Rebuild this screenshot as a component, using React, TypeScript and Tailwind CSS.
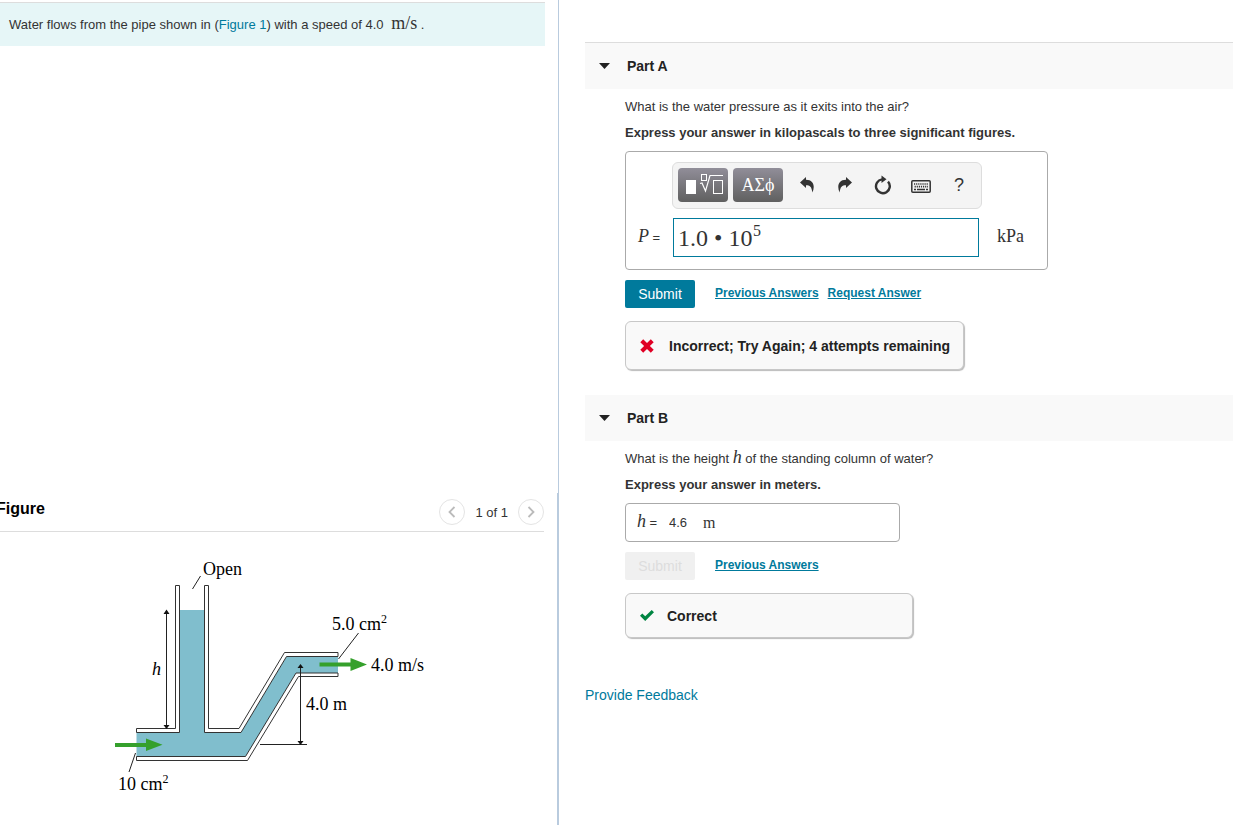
import React from "react";

const serif = "font-['Liberation_Serif',serif]";

function PartHeader({ title, className = "" }: { title: string; className?: string }) {
  return (
    <h2 className={"bg-[#f9f9f9] text-sm font-bold text-[#222] " + className}>
      <button type="button" className="flex h-[46px] w-full items-center pl-[14px] text-left">
        <svg className="mr-[17px]" width="11" height="6" viewBox="0 0 11 6">
          <path d="M0 0H11L5.5 6Z" fill="#222" />
        </svg>
        {title}
      </button>
    </h2>
  );
}

function TextLink({ children }: { children: React.ReactNode }) {
  return (
    <a href="#" className="text-xs font-bold text-[#007a9c] underline">
      {children}
    </a>
  );
}

function TemplateIcon() {
  return (
    <svg width="50" height="34" viewBox="0 0 50 34" fill="none" stroke="#fff">
      <rect x="8" y="12" width="10" height="14" fill="#fff" stroke="none" />
      <rect x="23.5" y="6.5" width="5" height="6" />
      <path d="M22 15.500L24 15L27.500 23L32 7.500H45" strokeWidth="1.2" />
      <rect x="35.5" y="12.5" width="9" height="13" />
    </svg>
  );
}

function UndoIcon({ flip = false }: { flip?: boolean }) {
  return (
    <svg className={flip ? "-scale-x-100" : ""} width="14" height="16" viewBox="0 0 14 16" fill="#333">
      <path d="M6 0L0 5.500L6 11V8.200C10 8.200 11.600 9.500 12.400 15.500C15 10 14.200 2.800 6 2.800Z" />
    </svg>
  );
}

function ResetIcon() {
  return (
    <svg width="18" height="20" viewBox="0 0 18 20" fill="none">
      <path d="M14 6.600A6.900 6.900 0 1 1 8 4.400" stroke="#333" strokeWidth="2.4" />
      <path d="M7.500 0.500L12.500 4.300L7.500 8.100Z" fill="#333" />
    </svg>
  );
}

function KeyboardIcon() {
  return (
    <svg width="20" height="13" viewBox="0 0 20 13" fill="none" stroke="#333">
      <rect x="0.8" y="0.8" width="18.4" height="11.4" rx="1" strokeWidth="1.5" />
      <path d="M3 4H17" strokeWidth="1.6" strokeDasharray="1.2 0.9" />
      <path d="M3.600 6.600H17" strokeWidth="1.6" strokeDasharray="1.2 0.9" />
      <path d="M3 9.400H5M6 9.400H14M15 9.400H17" strokeWidth="1.5" />
    </svg>
  );
}

function CrossIcon() {
  return (
    <svg className="mr-[15px]" width="14" height="14" viewBox="0 0 14 14" fill="#e00025">
      <path d="M3.200 0.300L7 4.100L10.800 0.300L13.700 3.200L9.900 7L13.700 10.800L10.800 13.700L7 9.900L3.200 13.700L0.300 10.800L4.100 7L0.300 3.200Z" />
    </svg>
  );
}

function CheckIcon() {
  return (
    <svg className="mr-[13px]" width="14" height="11" viewBox="0 0 14 11" fill="#008542">
      <path d="M2.300 3.500L5.200 6.300L11.700 0L14 2.300L5.200 11L0 5.800Z" />
    </svg>
  );
}

function PipeFigure() {
  return (
    <svg
      className={serif}
      width="340"
      height="250"
      viewBox="100 550 340 250"
      fontSize="18"
      role="img"
      aria-label="Pipe with an open standing column"
    >
      {/* water */}
      <path
        d="M179 610H204.500V732.500H240.500L286.500 656.500H338V673H296L246 756.500H136.500V732.500H179Z"
        fill="#80becd"
      />
      {/* pipe walls */}
      <g fill="#fff" stroke="#333" strokeWidth="1">
        <path d="M175.500 585.500H179.500V732.500H136.500V728.500H175.500Z" />
        <path d="M204.500 585.500H208.500V728.500H239L284.500 652.500H338V656.500H286.500L241 732.500H204.500Z" />
        <path d="M136.500 756.500H245.500L296 673H338V676.500H298.500L247.500 760.500H136.500Z" />
      </g>
      <g fill="none" stroke="#222" strokeWidth="1">
        <path d="M166.500 611V727M300.500 665V743M260 744.500H307" />
        <path d="M200.500 576L192.500 589M358.500 633L338.500 659M135.500 753L129 772" />
      </g>
      <g fill="#111">
        <path d="M163.500 614L166.500 609.500L169.500 614ZM163.500 725L166.500 729L169.500 725Z" />
        <path d="M297.500 668L300.500 664L303.500 668ZM297.500 741L300.500 745L303.500 741Z" />
      </g>
      <g fill="#35a02c">
        <path d="M115 743H146V738.500L162.500 744.800L146 751V747H115Z" />
        <path d="M319.500 662.500H350.500V658L367 664.500L350.500 671V666.500H319.500Z" />
      </g>
      <g fill="#000">
        <text x="203" y="575">Open</text>
        <text x="332" y="630">5.0 cm<tspan dy="-7" fontSize="12">2</tspan></text>
        <text x="371" y="671">4.0 m/s</text>
        <text x="306" y="710">4.0 m</text>
        <text x="152" y="675" fontStyle="italic">h</text>
        <text x="118" y="790">10 cm<tspan dy="-7" fontSize="12">2</tspan></text>
      </g>
    </svg>
  );
}

export default function App() {
  return (
    <div className="grid min-h-screen grid-cols-[559fr_674fr] bg-white font-['Liberation_Sans',Arial,sans-serif] text-[13px] text-[#333]">
      <div className="flex min-w-0 flex-col justify-between">
        <div className="grow border-r border-[#b9cbde] pt-0.5 pr-[13px]">
          <p className="h-11 border-t border-[#ddd] bg-[#e6f6f7] pl-[9px] leading-[44px]">
            Water flows from the pipe shown in (
            <a href="#figure" className="text-[#007a9c]">Figure 1</a>) with a speed of 4.0{" "}
            <span className={serif + " ml-1 text-lg leading-none"}>m/s</span> .
          </p>
        </div>

        <section id="figure" className="overflow-hidden border-r-2 border-[#b9cbde] pr-[13px]">
          <div className="flex h-[39px] items-center justify-between border-b border-[#ddd]">
            <h2 className="-ml-1 pb-1.5 text-base font-bold text-black">Figure</h2>
            <div className="flex items-center gap-[10px]">
              <button type="button" aria-label="Previous figure" className="flex size-[26px] items-center justify-center rounded-full border border-[#e4e4e4] text-[#bbb]">
                <svg width="8" height="12" viewBox="0 0 8 12" fill="none" stroke="currentColor" strokeWidth="1.8"><path d="M6.500 1L1.500 6L6.500 11" /></svg>
              </button>
              <span className="pt-0.5">1 of 1</span>
              <button type="button" aria-label="Next figure" className="flex size-[26px] items-center justify-center rounded-full border border-[#e4e4e4] text-[#bbb]">
                <svg width="8" height="12" viewBox="0 0 8 12" fill="none" stroke="currentColor" strokeWidth="1.8"><path d="M1.500 1L6.500 6L1.500 11" /></svg>
              </button>
            </div>
          </div>
          <div className="pt-[18px] pb-[25px] pl-[100px]">
            <PipeFigure />
          </div>
        </section>
      </div>

      <main className="min-w-0 pt-[42px] pl-[26px]">
        <PartHeader title="Part A" className="border-t border-[#ddd]" />
        <div className="pt-[5px] pl-10">
          <p className="leading-[26px]">What is the water pressure as it exits into the air?</p>
          <p className="leading-[26px] font-bold">Express your answer in kilopascals to three significant figures.</p>

          <div className="mt-[5px] h-[119px] max-w-[423px] rounded border border-[#aaa] pt-[10px] pl-3">
            <div className="ml-[34px] flex h-[47px] w-[310px] items-center rounded-md border border-[#ddd] bg-[#f4f4f4] pb-0.5 pl-[5px]">
              <button type="button" aria-label="Templates" className="mr-[5px] h-[34px] w-[50px] rounded bg-linear-to-b from-[#918e99] to-[#606060]">
                <TemplateIcon />
              </button>
              <button type="button" className={serif + " mr-[5px] h-[34px] w-[50px] rounded bg-linear-to-b from-[#918e99] to-[#606060] text-lg text-white"}>
                ΑΣϕ
              </button>
              <button type="button" aria-label="Undo" className="flex w-[38px] justify-center"><UndoIcon /></button>
              <button type="button" aria-label="Redo" className="flex w-[38px] justify-center"><UndoIcon flip /></button>
              <button type="button" aria-label="Reset" className="flex w-[38px] justify-center"><ResetIcon /></button>
              <button type="button" aria-label="Keyboard" className="flex w-[38px] justify-center pt-1"><KeyboardIcon /></button>
              <button type="button" aria-label="Help" className="w-[38px] text-lg">?</button>
            </div>
            <div className="mt-[9px] flex items-center">
              <label htmlFor="pressure" className="w-[35px]">
                <i className={serif + " text-lg leading-none"}>P</i> =
              </label>
              <div className={serif + " flex h-[39px] w-[306px] border border-[#007a9c] pl-1"}>
                <input id="pressure" defaultValue="1.0 • 10" className="w-[75px] text-2xl outline-none" />
                <input aria-label="Exponent" defaultValue="5" className="h-6 min-w-0 grow text-base outline-none" />
              </div>
              <span className={serif + " ml-[18px] pb-1 text-lg leading-none"}>kPa</span>
            </div>
          </div>

          <div className="mt-[10px] flex">
            <button type="button" className="mr-5 h-7 w-[70px] rounded-xs bg-[#007a9c] text-sm text-white">Submit</button>
            <div className="flex gap-[9px] pt-[5px]">
              <TextLink>Previous Answers</TextLink>
              <TextLink>Request Answer</TextLink>
            </div>
          </div>

          <div className="mt-[13px] flex h-[49px] w-[339px] items-center rounded-md border border-[#c8c8c8] bg-[#f9f9f9] pl-[14px] text-sm font-bold text-[#222] shadow-[1px_1px_1px_#bbb]">
            <CrossIcon />
            Incorrect; Try Again; 4 attempts remaining
          </div>
        </div>

        <PartHeader title="Part B" className="mt-[25px]" />
        <div className="pt-[5px] pl-10">
          <p className="leading-[26px]">
            What is the height <i className={serif + " text-lg leading-none"}>h</i> of the standing column of water?
          </p>
          <p className="leading-[26px] font-bold">Express your answer in meters.</p>

          <div className="mt-[5px] flex h-[39px] max-w-[275px] items-center rounded border border-[#aaa] pl-[11px]">
            <label htmlFor="height" className="w-8">
              <i className={serif + " text-lg leading-none"}>h</i> =
            </label>
            <input id="height" readOnly defaultValue="4.6" className="w-[34px] text-[13px] outline-none" />
            <span className={serif + " text-base leading-none"}>m</span>
          </div>

          <div className="mt-[10px] flex">
            <button type="button" disabled className="mr-5 h-7 w-[70px] rounded-xs bg-[#f0f0f0] text-sm text-[#ddd]">Submit</button>
            <div className="flex pt-[5px]">
              <TextLink>Previous Answers</TextLink>
            </div>
          </div>

          <div className="mt-[13px] flex h-[45px] w-[288px] items-center rounded-md border border-[#c8c8c8] bg-[#f9f9f9] pl-[14px] text-sm font-bold text-[#222] shadow-[1px_1px_1px_#bbb]">
            <CheckIcon />
            Correct
          </div>
        </div>

        <a href="#" className="mt-[47px] inline-block text-sm text-[#007a9c]">Provide Feedback</a>
      </main>
    </div>
  );
}
